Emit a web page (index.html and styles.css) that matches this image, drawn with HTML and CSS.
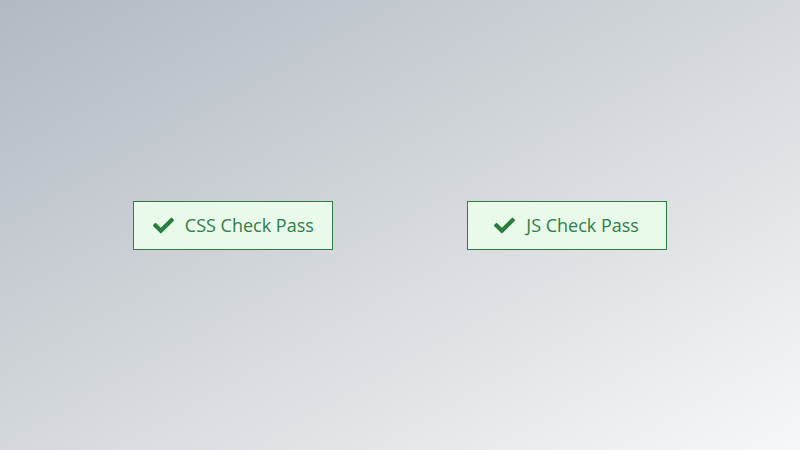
FILE: index.html
```html
<!DOCTYPE html>
<html lang="en">
<head>
<meta charset="utf-8">
<title>Checks</title>
<link rel="stylesheet" href="styles.css">
</head>
<body>
  <main class="stage">
    <div class="badge">
      <svg class="check" viewBox="0 0 512 512" aria-hidden="true"><path d="M173.9 439.4l-166.4-166.4c-10-10-10-26.2 0-36.2l36.2-36.2c10-10 26.2-10 36.2 0L192 312.7 432.1 72.6c10-10 26.2-10 36.2 0l36.2 36.2c10 10 10 26.2 0 36.2l-294.4 294.4c-10 10-26.2 10-36.2 0z"/></svg>
      <span class="label">CSS Check Pass</span>
    </div>
    <div class="badge">
      <svg class="check" viewBox="0 0 512 512" aria-hidden="true"><path d="M173.9 439.4l-166.4-166.4c-10-10-10-26.2 0-36.2l36.2-36.2c10-10 26.2-10 36.2 0L192 312.7 432.1 72.6c10-10 26.2-10 36.2 0l36.2 36.2c10 10 10 26.2 0 36.2l-294.4 294.4c-10 10-26.2 10-36.2 0z"/></svg>
      <span class="label">JS Check Pass</span>
    </div>
  </main>
</body>
</html>
```
FILE: styles.css
```css
html, body {
  margin: 0;
  height: 100%;
}

body {
  background: linear-gradient(to bottom right, #b2b9c3 0%, #d4d8dc 50%, #f6f7f8 100%);
  font-family: "Open Sans", "Noto Sans", sans-serif;
}

.stage {
  width: 800px;
  height: 450px;
  display: flex;
  align-items: center;
  justify-content: space-evenly;
}

.badge {
  box-sizing: border-box;
  width: 200px;
  height: 49px;
  display: flex;
  align-items: center;
  justify-content: center;
  gap: 11px;
  background: #eafaea;
  border: 1px solid #2e7d3e;
  color: #2e7d4a;
}

.check {
  width: 21px;
  height: 21px;
  fill: #2a7d3f;
}

.label {
  font-size: 18px;
  line-height: 1;
}
```
